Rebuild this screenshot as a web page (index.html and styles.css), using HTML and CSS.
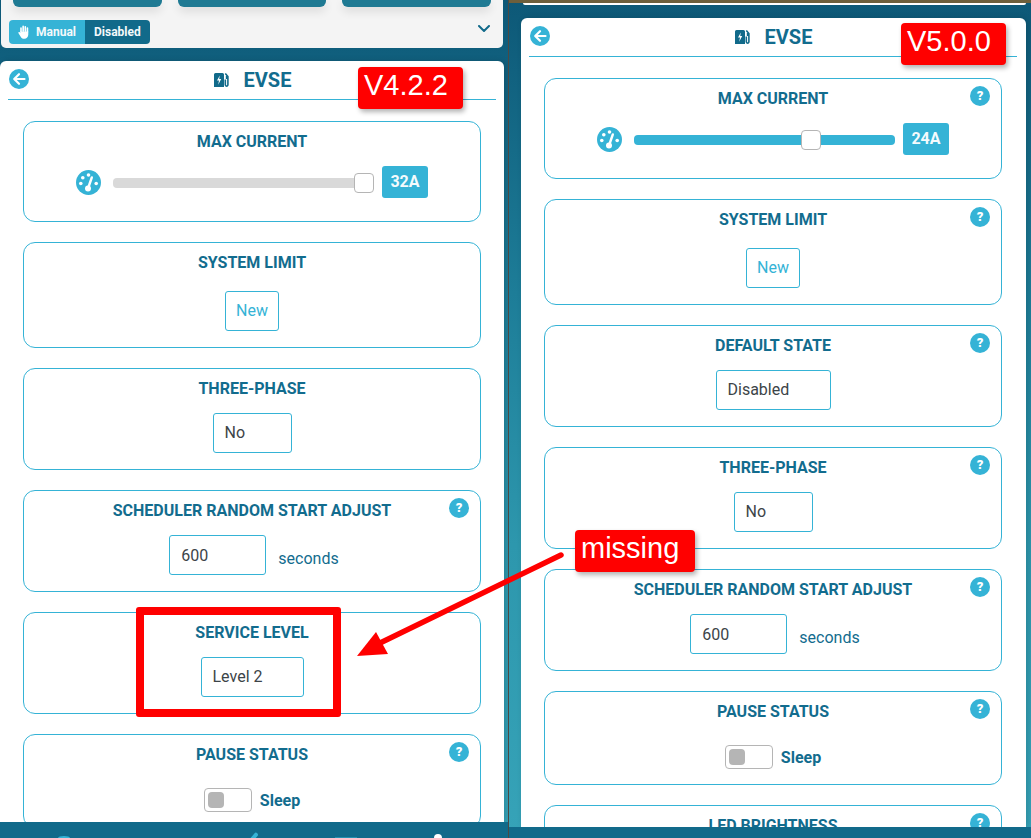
FILE: index.html
```html
<!DOCTYPE html>
<html lang="en">
<head>
    <meta charset="UTF-8">
    <title>EVSE settings V4.2.2 and V5.0.0</title>
    <link rel="stylesheet" href="styles.css">
</head>
<body>
    <svg class="icon-defs" width="0" height="0">
        <symbol id="icon-back" viewBox="0 0 20 20">
            <circle cx="10" cy="10" r="10" fill="#35b3d6"/>
            <path d="M15.5 10H5.5M10 5.2 5.2 10l4.8 4.8" fill="none" stroke="#fff" stroke-width="2.2" stroke-linecap="round" stroke-linejoin="round"/>
        </symbol>
        <symbol id="icon-station" viewBox="0 0 15 16">
            <path d="M1.5 1h7A1.5 1.5 0 0 1 10 2.500V15H0V2.500A1.500 1.500 0 0 1 1.500 1Z" fill="#116a8a"/>
            <path d="M5.800 3.500 3 8.500h2L4.200 12.800 7.200 7H5.200Z" fill="#fff"/>
            <path d="M11.300 1.500 13.900 4.500v8.300a1.300 1.300 0 0 1-2.600 0V7.500" fill="none" stroke="#116a8a" stroke-width="1.600"/>
            <rect x="11.800" y="4" width="2" height="3" fill="#116a8a"/>
        </symbol>
        <symbol id="icon-gauge" viewBox="0 0 25 25">
            <circle cx="12.500" cy="12.500" r="12.500" fill="#35b3d6"/>
            <circle cx="12.500" cy="5" r="1.800" fill="#fff"/>
            <circle cx="6.800" cy="7.800" r="1.800" fill="#fff"/>
            <circle cx="4.800" cy="13.500" r="1.800" fill="#fff"/>
            <circle cx="20.200" cy="13.500" r="1.800" fill="#fff"/>
            <circle cx="12" cy="18.500" r="3" fill="#fff"/>
            <path d="M12 18.500 15.800 7.500" stroke="#fff" stroke-width="2.400" stroke-linecap="round"/>
        </symbol>
        <symbol id="icon-hand" viewBox="0 0 14 16">
            <path d="M3.500 8V3.500M6 7V1.500M8.500 7V2M11 8V3.500" stroke="#fff" stroke-width="1.900" stroke-linecap="round"/>
            <path d="M2.500 7.500h9.500V11c0 3-2 5-4.500 5S4 15 2.800 13L.6 9.500c-.6-1.100.8-2 1.600-1L3 9.500Z" fill="#fff"/>
        </symbol>
    </svg>

    <div class="screen">
        <section class="pane pane-old">
            <div class="status-card">
                <div class="top-buttons">
                    <span class="top-button"></span>
                    <span class="top-button"></span>
                    <span class="top-button"></span>
                </div>
                <div class="status-row">
                    <div class="mode-pill">
                        <span class="mode-state"><svg class="hand"><use href="#icon-hand"/></svg>Manual</span>
                        <span class="mode-value">Disabled</span>
                    </div>
                    <svg class="chevron" viewBox="0 0 12 7"><path d="M1 1l5 5 5-5" fill="none" stroke="#116a8a" stroke-width="2" stroke-linecap="round"/></svg>
                </div>
            </div>

            <div class="evse-card">
                <header class="evse-header">
                    <svg class="back"><use href="#icon-back"/></svg>
                    <h1 class="evse-title"><svg class="station"><use href="#icon-station"/></svg>EVSE</h1>
                </header>
                <div class="settings">
                    <div class="setting">
                        <h2>Max Current</h2>
                        <div class="row row-slider">
                            <svg class="gauge"><use href="#icon-gauge"/></svg>
                            <input class="slider slider-off" type="range" min="6" max="32" value="32">
                            <span class="amps">32A</span>
                        </div>
                    </div>
                    <div class="setting">
                        <h2>System Limit</h2>
                        <div class="row row-new"><button class="new-btn">New</button></div>
                    </div>
                    <div class="setting">
                        <h2>Three-Phase</h2>
                        <div class="row"><select class="field field-phase"><option>No</option></select></div>
                    </div>
                    <div class="setting">
                        <span class="help">?</span>
                        <h2>Scheduler Random Start Adjust</h2>
                        <div class="row row-num">
                            <input class="field field-num" type="text" value="600">
                            <span class="unit">seconds</span>
                        </div>
                    </div>
                    <div class="setting">
                        <h2>Service Level</h2>
                        <div class="row"><select class="field field-level"><option>Level 2</option></select></div>
                    </div>
                    <div class="setting setting-toggle">
                        <span class="help">?</span>
                        <h2>Pause Status</h2>
                        <div class="row row-toggle">
                            <span class="toggle"><span class="knob"></span></span>
                            <span class="toggle-label">Sleep</span>
                        </div>
                    </div>
                </div>
            </div>

            <nav class="bottom-nav">
                <i class="peek peek-a"></i>
                <i class="peek peek-b"></i>
                <i class="peek peek-c"></i>
                <i class="peek peek-d"></i>
            </nav>
        </section>

        <section class="pane pane-new">
            <div class="top-band"></div>
            <div class="prev-card"></div>
            <div class="evse-card">
                <header class="evse-header">
                    <svg class="back"><use href="#icon-back"/></svg>
                    <h1 class="evse-title"><svg class="station"><use href="#icon-station"/></svg>EVSE</h1>
                </header>
                <div class="settings">
                    <div class="setting">
                        <span class="help">?</span>
                        <h2>Max Current</h2>
                        <div class="row row-slider">
                            <svg class="gauge"><use href="#icon-gauge"/></svg>
                            <input class="slider" type="range" min="6" max="32" value="24">
                            <span class="amps">24A</span>
                        </div>
                    </div>
                    <div class="setting">
                        <span class="help">?</span>
                        <h2>System Limit</h2>
                        <div class="row row-new"><button class="new-btn">New</button></div>
                    </div>
                    <div class="setting">
                        <span class="help">?</span>
                        <h2>Default State</h2>
                        <div class="row"><select class="field field-state"><option>Disabled</option></select></div>
                    </div>
                    <div class="setting">
                        <span class="help">?</span>
                        <h2>Three-Phase</h2>
                        <div class="row"><select class="field field-phase"><option>No</option></select></div>
                    </div>
                    <div class="setting">
                        <span class="help">?</span>
                        <h2>Scheduler Random Start Adjust</h2>
                        <div class="row row-num">
                            <input class="field field-num" type="text" value="600">
                            <span class="unit">seconds</span>
                        </div>
                    </div>
                    <div class="setting setting-toggle">
                        <span class="help">?</span>
                        <h2>Pause Status</h2>
                        <div class="row row-toggle">
                            <span class="toggle"><span class="knob"></span></span>
                            <span class="toggle-label">Sleep</span>
                        </div>
                    </div>
                    <div class="setting">
                        <span class="help">?</span>
                        <h2>LED Brightness</h2>
                    </div>
                </div>
            </div>
            <nav class="bottom-nav"></nav>
        </section>

        <!-- red notes drawn on top of the screenshots -->
        <div class="note note-old">V4.2.2</div>
        <div class="note note-new">V5.0.0</div>
        <div class="note note-missing">missing</div>
        <div class="highlight"></div>
        <svg class="arrow" width="1031" height="838">
            <path d="M561 555 378 644" fill="none" stroke="#f00" stroke-width="5.500" stroke-linecap="round"/>
            <path d="M357 656 376 632 388 654Z" fill="#f00"/>
        </svg>
    </div>
</body>
</html>
```
FILE: styles.css
```css
* {
    box-sizing: border-box;
}

body {
    margin: 0;
    font-family: Roboto, "Liberation Sans", sans-serif;
    color: #126c8e;
    background-color: #116a8a;
}

.icon-defs {
    display: block;
    height: 0;
}

.screen {
    position: relative;
    display: flex;
    width: 1031px;
    height: 838px;
    overflow: hidden;
}

.pane {
    display: flex;
    flex-direction: column;
    height: 838px;
    background: linear-gradient(#0d5877, #1d7d98 35%, #2d97ad 65%, #36a3b8);
}

.pane-old {
    width: 508px;
}

.pane-new {
    width: 523px;
    border-left: 1px solid #4a4a45;
}

/* top of the left screenshot */
.status-card {
    flex: none;
    height: 48px;
    margin: 0 5px 0 1px;
    padding: 0 12px 0 8px;
    background-color: #f4f4f4;
    border-radius: 0 0 5px 5px;
}

.top-buttons {
    display: flex;
    gap: 16px;
    padding-left: 4px;
}

.top-button {
    flex: 1;
    height: 7px;
    background-color: #1f7a93;
    border-radius: 0 0 6px 6px;
    box-shadow: 0 4px 10px rgba(0, 0, 0, 0.12);
}

.status-row {
    display: flex;
    justify-content: space-between;
    align-items: flex-start;
    margin-top: 13px;
}

.mode-pill {
    display: flex;
    height: 24px;
    font-size: 12px;
    font-weight: 700;
    line-height: 24px;
    color: #f4f9fb;
    border-radius: 4px;
    overflow: hidden;
}

.mode-state {
    display: flex;
    align-items: center;
    gap: 6px;
    width: 76px;
    padding-left: 9px;
    background-color: #35b3d6;
}

.mode-value {
    width: 65px;
    padding-left: 9px;
    background-color: #116a8a;
}

.hand {
    width: 12px;
    height: 14px;
}

.chevron {
    width: 12px;
    height: 7px;
    margin: 5px 1px 0 0;
}

/* EVSE panel, same in both versions */
.evse-card {
    flex: 1;
    min-height: 0;
    background-color: #fff;
    border-radius: 6px 6px 0 0;
    overflow: hidden;
    box-shadow: 2px 0 6px rgba(0, 0, 0, 0.15);
}

.pane-old .evse-card {
    width: 504px;
    margin-top: 13px;
}

.pane-new .evse-card {
    margin: 13px 5px 0 12px;
}

.top-band {
    flex: none;
    height: 3px;
    background-color: #6d5f3c;
}

.prev-card {
    flex: none;
    height: 2px;
    margin: 0 5px 0 14px;
    background-color: #fff;
    border-radius: 0 0 4px 4px;
}

.evse-header {
    position: relative;
    height: 39px;
    margin: 0 8px;
    display: flex;
    justify-content: center;
    align-items: center;
    border-bottom: 1px solid #35b3d6;
}

.pane-new .evse-header {
    margin-right: 9px;
}

.back {
    position: absolute;
    left: 1px;
    top: 8px;
    width: 20px;
    height: 20px;
}

.evse-title {
    display: flex;
    align-items: center;
    gap: 15px;
    margin: 0 0 0 1px;
    font-size: 20px;
    font-weight: 700;
    line-height: 24px;
}

.station {
    width: 15px;
    height: 16px;
}

.settings {
    display: flex;
    flex-direction: column;
    gap: 20px;
    padding: 21px 23px 0;
}

.pane-new .settings {
    padding-right: 24px;
}

.setting {
    position: relative;
    flex: none;
    padding: 10px 0 16px;
    text-align: center;
    border: 1px solid #35b3d6;
    border-radius: 12px;
}

.setting-toggle {
    padding-bottom: 15px;
}

.setting h2 {
    margin: 0;
    font-size: 16px;
    font-weight: 700;
    line-height: 20px;
    text-transform: uppercase;
}

.help {
    position: absolute;
    top: 7px;
    right: 11px;
    width: 20px;
    height: 20px;
    font-size: 13px;
    font-weight: 900;
    line-height: 20px;
    color: #fff;
    background-color: #35b3d6;
    border-radius: 50%;
}

.row {
    display: flex;
    justify-content: center;
    align-items: center;
    margin-top: 14px;
}

.row-slider {
    margin-bottom: 7px;
}

.row-new {
    margin-top: 18px;
}

.row-num {
    padding-left: 4px;
}

.row-toggle {
    gap: 8px;
    margin-top: 23px;
}

.gauge {
    width: 25px;
    height: 25px;
    margin: 1px 12px 0 0;
}

.slider {
    appearance: none;
    -webkit-appearance: none;
    width: 261px;
    height: 10px;
    margin: 2px 8px 0 0;
    background-color: #35b3d6;
    border-radius: 4px;
}

.slider-off {
    background-color: #d9d9d9;
}

.slider::-webkit-slider-thumb {
    -webkit-appearance: none;
    width: 20px;
    height: 20px;
    background-color: #fff;
    border: 1px solid #b5b5b5;
    border-radius: 4px;
}

.amps {
    width: 46px;
    height: 32px;
    font-size: 16px;
    font-weight: 700;
    line-height: 32px;
    color: #f4fbfd;
    background-color: #35b3d6;
    border-radius: 3px;
}

.new-btn {
    width: 54px;
    height: 40px;
    padding: 0 0 2px;
    font-family: inherit;
    font-size: 16px;
    color: #35b3d6;
    background-color: #fff;
    border: 1px solid #35b3d6;
    border-radius: 3px;
}

.field {
    appearance: none;
    -webkit-appearance: none;
    height: 40px;
    padding: 0 0 2px 11px;
    font-family: inherit;
    font-size: 16px;
    color: #3c4448;
    background-color: #fff;
    border: 1px solid #35b3d6;
    border-radius: 3px;
    opacity: 1;
}

.field-phase {
    width: 79px;
}

.field-level {
    width: 103px;
}

.field-state {
    width: 115px;
}

.field-num {
    width: 97px;
    padding: 1px 0 0 11px;
}

.unit {
    margin: 6px 0 0 12px;
    font-size: 16px;
}

.toggle {
    width: 48px;
    height: 24px;
    padding: 3px;
    background-color: #fff;
    border: 1px solid #b5b5b5;
    border-radius: 4px;
}

.knob {
    display: block;
    width: 16px;
    height: 16px;
    background-color: #b5b5b5;
    border-radius: 4px;
}

.toggle-label {
    font-size: 16px;
    font-weight: 700;
}

.bottom-nav {
    position: relative;
    flex: none;
    background-color: #116a8a;
}

.pane-old .bottom-nav {
    height: 16px;
}

.pane-new .bottom-nav {
    height: 11px;
}

/* tops of the nav icons, cut off by the window */
.peek {
    position: absolute;
    display: block;
    background-color: #35b3d6;
}

.peek-a {
    left: 58px;
    top: 14px;
    width: 12px;
    height: 4px;
    border-radius: 50%;
}

.peek-b {
    left: 252px;
    top: 10px;
    width: 4px;
    height: 10px;
    transform: rotate(40deg);
    border-radius: 2px;
}

.peek-c {
    left: 335px;
    top: 15px;
    width: 22px;
    height: 2px;
    opacity: 0.5;
}

.peek-d {
    left: 434px;
    top: 12px;
    width: 8px;
    height: 8px;
    background-color: #fff;
    border-radius: 50%;
}

/* annotations */
.note {
    position: absolute;
    width: 105px;
    height: 42px;
    padding-left: 6px;
    font-family: "Liberation Sans", Arial, sans-serif;
    font-size: 29px;
    line-height: 37px;
    color: #fff;
    background-color: #f00;
    border-radius: 4px;
    box-shadow: 2px 3px 5px rgba(0, 0, 0, 0.3);
}

.note-old {
    left: 358px;
    top: 67px;
}

.note-new {
    left: 901px;
    top: 23px;
}

.note-missing {
    left: 575px;
    top: 530px;
    width: 120px;
}

.highlight {
    position: absolute;
    left: 136px;
    top: 607px;
    width: 205px;
    height: 110px;
    border: 8px solid #f00;
    border-radius: 3px;
}

.arrow {
    position: absolute;
    left: 0;
    top: 0;
    pointer-events: none;
}
```
